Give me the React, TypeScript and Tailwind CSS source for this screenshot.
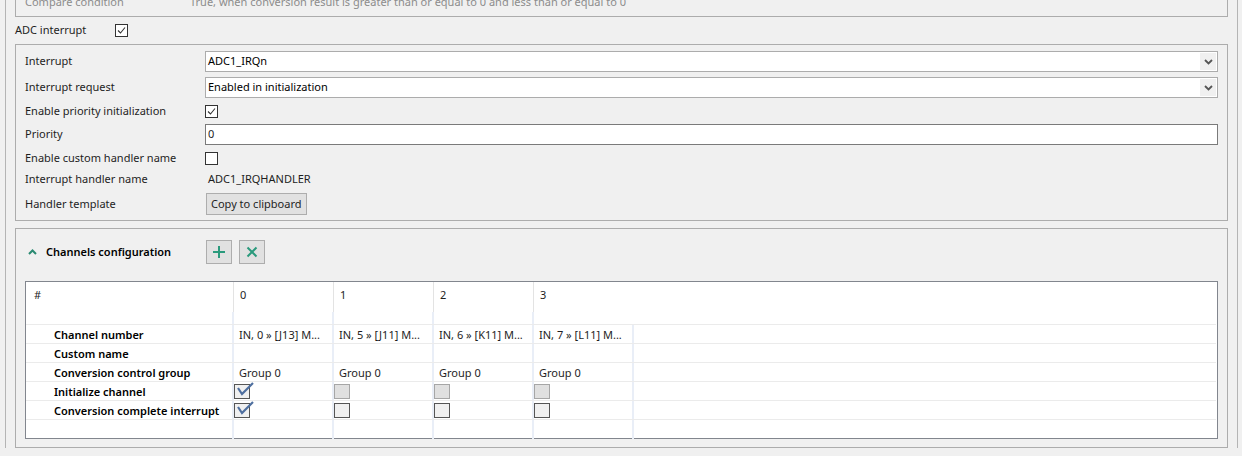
import React from "react";

const font = { fontFamily: '"Noto Sans", "Open Sans", sans-serif' };

function Check({ checked }: { checked: boolean }) {
  return (
    <div className="w-[13px] h-[13px] border border-[#333] bg-white flex items-center justify-center">
      {checked && (
        <svg width="11" height="11" viewBox="0 0 11 11">
          <path d="M2 5.5 L4.5 8 L9 2.5" fill="none" stroke="#333" strokeWidth="1.1" />
        </svg>
      )}
    </div>
  );
}

function Select({ value }: { value: string }) {
  return (
    <div className="flex-1 h-[21px] border border-[#acacac] bg-white flex items-center pl-[2px] pr-[1px]">
      <span className="flex-1 text-black">{value}</span>
      <div className="w-[16px] h-[17px] bg-[#f0f0f0] flex items-center justify-center">
        <svg width="9" height="6" viewBox="0 0 9 6">
          <path d="M1 1 L4.5 4.5 L8 1" fill="none" stroke="#555" strokeWidth="1.8" />
        </svg>
      </div>
    </div>
  );
}

function TableCheck({ kind }: { kind: "checked" | "disabled" | "empty" }) {
  if (kind === "checked") {
    return (
      <div className="relative w-[16px] h-[15px] border border-[#555] bg-[#f0f0f0]">
        <svg className="absolute left-[1px] top-[-6px]" width="20" height="20" viewBox="0 0 20 20">
          <path d="M2 9 L6 15 L17 4" fill="none" stroke="#4f6f9f" strokeWidth="2.2" />
        </svg>
      </div>
    );
  }
  if (kind === "disabled") {
    return <div className="w-[16px] h-[15px] border border-[#a6a6a6] bg-[#e0e0e0]" />;
  }
  return <div className="w-[16px] h-[15px] border border-[#555] bg-[#f0f0f0]" />;
}

const cols = [
  { n: "0", ch: "IN, 0 » [J13] M...", init: "checked" as const, cc: "checked" as const },
  { n: "1", ch: "IN, 5 » [J11] M...", init: "disabled" as const, cc: "empty" as const },
  { n: "2", ch: "IN, 6 » [K11] M...", init: "disabled" as const, cc: "empty" as const },
  { n: "3", ch: "IN, 7 » [L11] M...", init: "disabled" as const, cc: "empty" as const },
];

const rows = ["Channel number", "Custom name", "Conversion control group", "Initialize channel", "Conversion complete interrupt", ""];

function Cell({ row, c }: { row: number; c: (typeof cols)[number] }) {
  let content: React.ReactNode = null;
  if (row === 0) content = <span className="pl-[5px] pt-[2px]">{c.ch}</span>;
  if (row === 2) content = <span className="pl-[5px] pt-[2px]">Group 0</span>;
  if (row === 3) content = <div className="pt-[1px]"><TableCheck kind={c.init} /></div>;
  if (row === 4) content = <div className="pt-[1px]"><TableCheck kind={c.cc} /></div>;
  return (
    <div className="w-[100px] h-full flex items-center border-l-2 border-[#e9eef7] whitespace-nowrap overflow-hidden">
      {content}
    </div>
  );
}

export default function App() {
  return (
    <div className="w-[1242px] h-[456px] bg-[#f0f0f0] overflow-hidden text-[11px] text-[#1e1e1e]" style={font}>
      <div className="ml-[5px] w-[1233px] h-[456px] border-x border-[#b4b4b4] pl-[9px] pr-[9px]">
        {/* Compare condition panel (cut off) */}
        <div className="mt-[-8px] border border-[#acacac] h-[25px] flex items-center pl-[9px] pb-[4px] text-[#8c8c8c]">
          <span className="w-[165px]">Compare condition</span>
          <span>True, when conversion result is greater than or equal to 0 and less than or equal to 0</span>
        </div>
        {/* ADC interrupt */}
        <div className="h-[27px] flex items-center">
          <span className="w-[100px]">ADC interrupt</span>
          <div className="mt-[-1px]"><Check checked /></div>
        </div>
        {/* Interrupt panel */}
        <div className="border border-[#acacac] pl-[9px] pr-[9px] pt-[6px] pb-[5px] flex flex-col">
          <div className="h-[21px] flex items-center">
            <span className="w-[180px]">Interrupt</span>
            <Select value="ADC1_IRQn" />
          </div>
          <div className="h-[21px] mt-[5px] flex items-center">
            <span className="w-[180px]">Interrupt request</span>
            <Select value="Enabled in initialization" />
          </div>
          <div className="h-[26px] flex items-center">
            <span className="w-[180px]">Enable priority initialization</span>
            <Check checked />
          </div>
          <div className="h-[21px] flex items-center">
            <span className="w-[180px]">Priority</span>
            <div className="flex-1 h-[21px] border border-[#7a7a7a] bg-white flex items-center pl-[2px]">0</div>
          </div>
          <div className="h-[26px] flex items-center">
            <span className="w-[180px]">Enable custom handler name</span>
            <Check checked={false} />
          </div>
          <div className="h-[16px] flex items-center">
            <span className="w-[183px]">Interrupt handler name</span>
            <span>ADC1_IRQHANDLER</span>
          </div>
          <div className="h-[22px] mt-[6px] flex items-center">
            <span className="w-[181px]">Handler template</span>
            <div className="h-[22px] px-[4px] border border-[#adadad] bg-[#e1e1e1] flex items-center">Copy to clipboard</div>
          </div>
        </div>
        {/* Channels panel */}
        <div className="mt-[7px] border border-[#acacac] pl-[9px] pr-[9px] pt-[11px] pb-[8px]">
          <div className="h-[24px] flex items-center">
            <svg className="ml-[3px] mr-[9px]" width="9" height="6" viewBox="0 0 9 6">
              <path d="M1 5 L4.5 1.5 L8 5" fill="none" stroke="#2a8a72" strokeWidth="2" />
            </svg>
            <span className="w-[160px] font-semibold text-black">Channels configuration</span>
            <div className="w-[26px] h-[24px] border border-[#adadad] bg-[#e1e1e1] flex items-center justify-center">
              <svg width="14" height="14" viewBox="0 0 14 14">
                <path d="M7 1 V13 M1 7 H13" stroke="#2a9a7c" strokeWidth="2" />
              </svg>
            </div>
            <div className="ml-[7px] w-[26px] h-[24px] border border-[#adadad] bg-[#e1e1e1] flex items-center justify-center">
              <svg width="12" height="12" viewBox="0 0 12 12">
                <path d="M1.5 1.5 L10.5 10.5 M10.5 1.5 L1.5 10.5" stroke="#2a9a7c" strokeWidth="2" />
              </svg>
            </div>
          </div>
          <div className="mt-[17px] h-[158px] border border-[#82868e] bg-white flex flex-col">
            <div className="h-[30px] shrink-0 flex">
              <div className="w-[207px] pl-[8px] pt-[5px]">#</div>
              {cols.map((c) => (
                <div key={c.n} className="w-[100px] border-l border-[#e3e3e3] pl-[6px] pt-[5px]">{c.n}</div>
              ))}
            </div>
            <div className="h-[13px] shrink-0 flex border-b border-[#ebebeb] mr-[1px]">
              <div className="w-[206px]" />
              {cols.map((c) => (
                <div key={c.n} className="w-[100px] border-l-2 border-[#e9eef7]" />
              ))}
            </div>
            {rows.map((r, i) => (
              <div key={i} className={`h-[19px] shrink-0 flex mr-[1px] ${i < rows.length - 1 ? "border-b border-[#ebebeb]" : ""}`}>
                <div className="w-[206px] pl-[28px] pt-[2px] flex items-center font-semibold text-black whitespace-nowrap">{r}</div>
                {cols.map((c) => (
                  <Cell key={c.n} row={i} c={c} />
                ))}
                <div className="border-l-2 border-[#e9eef7]" />
              </div>
            ))}
          </div>
        </div>
      </div>
    </div>
  );
}
